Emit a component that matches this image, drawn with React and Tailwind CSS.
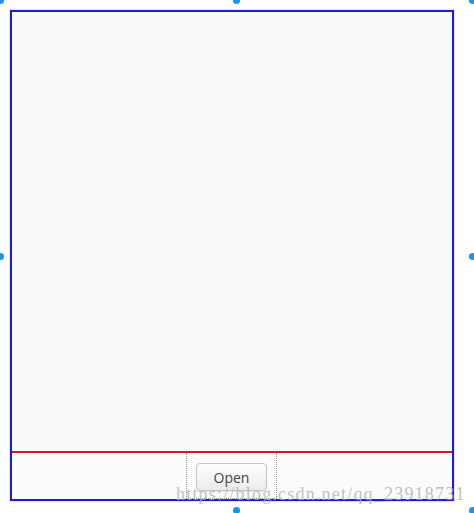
const HANDLES = [
  'left-[-3px] top-[-3px]',
  'left-[233px] top-[-3px]',
  'left-[469px] top-[-3px]',
  'left-[-3px] top-[253px]',
  'left-[469px] top-[253px]',
  'left-[233px] top-[507px]',
  'left-[469px] top-[507px]',
]

export default function App() {
  return (
    <div className="relative h-[513px] w-[474px] overflow-hidden bg-white">
      <div className="absolute left-[9px] top-[9px] h-[493px] w-[446px] border border-[#e4e4dc]">
        <div className="flex h-full w-full flex-col border-2 border-[#1c1cdc] bg-[#f9f9f9]">
          <div className="flex-1" />
          <div className="h-[2px] w-full bg-[#e0161e]" />
          <div className="flex h-[46px] justify-center bg-[#fbfbfb]">
            <div className="ml-[-1px] flex w-[91px] items-start justify-center border-x border-b border-dotted border-[#9a9a9a] pt-[10px]">
              <button
                type="button"
                className="h-[28px] w-[71px] rounded-[4px] border border-[#c4c4c4] bg-gradient-to-b from-[#fdfdfd] to-[#ececec] text-[14px] font-medium text-[#444444] shadow-[0_1px_1px_rgba(0,0,0,0.08)]"
                style={{ fontFamily: '"Open Sans", "DejaVu Sans", sans-serif' }}
              >
                Open
              </button>
            </div>
          </div>
        </div>
      </div>

      <p
        className="pointer-events-none absolute left-[176px] top-[481px] text-[18px] tracking-[1.2px] text-[#b0b0b0]/80"
        style={{ fontFamily: '"Liberation Serif", "DejaVu Serif", serif' }}
      >
        https://blog.csdn.net/qq_23918731
      </p>

      {HANDLES.map((pos) => (
        <span key={pos} className={`absolute h-[7px] w-[7px] rounded-full bg-[#1a96e6] ${pos}`} />
      ))}
    </div>
  )
}
